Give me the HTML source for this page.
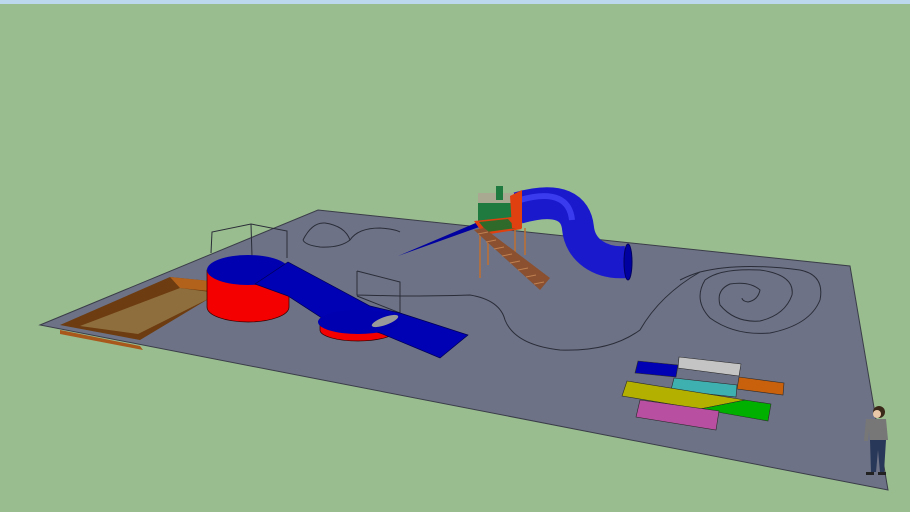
<!DOCTYPE html>
<html><head><style>html,body{margin:0;padding:0;width:910px;height:512px;overflow:hidden;background:#9abd8f}</style></head>
<body>
<svg width="910" height="512" viewBox="0 0 910 512" xmlns="http://www.w3.org/2000/svg">
<rect width="910" height="512" fill="#9abd8f"/>
<rect width="910" height="4" fill="#bcd8ee"/>
<polygon points="318,210 850,266 888,490 40,325" fill="#6d7286" stroke="#3a3d48" stroke-width="1"/>
<g fill="none" stroke="#2a2d38" stroke-width="1">
<path d="M303,240 Q312,222 325,223 Q345,226 350,240 Q340,248 320,247 Q305,245 303,240 M350,240 Q358,228 380,228 Q395,229 400,232"/>
<path d="M400,296 Q440,296 470,295 Q500,300 505,320 Q515,345 560,350 Q610,352 640,330 Q660,295 700,272 Q740,262 800,270 Q825,275 820,300 Q810,325 770,333 Q735,336 710,318 Q693,300 705,280 Q720,268 760,270 Q795,275 792,295 Q785,315 760,321 Q735,323 720,305 Q716,290 730,284 Q750,281 760,290 Q758,300 748,302 Q742,301 742,298"/>
<path d="M700,272 Q690,275 680,280"/>
<polyline points="211,253 212,232 251,224 287,231 287,258"/>
<polyline points="251,224 252,256"/>
<polyline points="357,271 357,295 400,296 400,313 357,296"/>
<polyline points="357,271 400,282 400,296"/>
</g>
<!-- sandbox -->
<polygon points="60,330 140,346 143,350 60,334" fill="#a8581a"/>
<polygon points="60,325 170,277 210,281 210,298 140,340" fill="#6d3c10"/>
<polygon points="80,326 180,288 210,292 210,298 138,334" fill="#8e6e3c"/>
<polygon points="170,277 210,281 210,291 180,288" fill="#b3621c"/>
<!-- cylinder 1 -->
<path d="M207,270 L207,307 A41,15 0 0 0 289,307 L289,270 Z" fill="#f40000" stroke="#300" stroke-width="0.7"/>
<ellipse cx="248" cy="270" rx="41" ry="15" fill="#0000b0"/>
<!-- cylinder 2 -->
<path d="M320,322 L320,330 A38,11 0 0 0 396,330 L396,322 Z" fill="#f40000" stroke="#300" stroke-width="0.7"/>
<!-- ramp -->
<polygon points="255,284 288,262 370,306 400,313 468,335 440,358 380,333 325,320 288,296" fill="#0000b4" stroke="#000050" stroke-width="0.7"/>
<ellipse cx="358" cy="322" rx="40" ry="12" fill="#0000b0"/>
<ellipse cx="385" cy="321" rx="14" ry="4" fill="#999" transform="rotate(-20 385 321)"/>
<polygon points="398,256 478,222 482,226" fill="#0000a0"/>
<!-- tube -->
<path d="M518,208 C560,196 576,208 578,228 C580,250 600,264 626,262" fill="none" stroke="#1a1acc" stroke-width="32" stroke-linecap="butt"/>
<path d="M520,200 C555,190 570,200 572,220" fill="none" stroke="#3a3aee" stroke-width="6"/>
<ellipse cx="628" cy="262" rx="4" ry="18" fill="#0000a0" stroke="#000060"/>
<!-- treehouse -->
<rect x="478" y="195" width="36" height="32" fill="#1f7a3f"/>
<rect x="478" y="193" width="36" height="10" fill="#a9a890"/>
<rect x="496" y="186" width="7" height="14" fill="#1f7a3f"/>
<polygon points="474,221 512,217 522,229 484,235" fill="#e04010"/>
<polygon points="479,222 508,219 516,228 487,232" fill="#2f6a2a"/>
<polygon points="510,196 522,190 522,228 512,228" fill="#e04010"/>
<g stroke="#c07030" stroke-width="1.5">
<line x1="480" y1="232" x2="480" y2="278"/><line x1="488" y1="235" x2="488" y2="265"/>
<line x1="515" y1="230" x2="515" y2="260"/><line x1="525" y1="228" x2="525" y2="255"/>
</g>
<polygon points="474,230 484,228 550,278 540,290" fill="#8a5030"/>
<g stroke="#c08050" stroke-width="1">
<line x1="478" y1="234" x2="488" y2="232"/><line x1="486" y1="242" x2="496" y2="240"/><line x1="494" y1="249" x2="504" y2="247"/><line x1="502" y1="256" x2="512" y2="254"/><line x1="510" y1="263" x2="520" y2="261"/><line x1="518" y1="270" x2="528" y2="268"/><line x1="526" y1="277" x2="536" y2="275"/><line x1="534" y1="284" x2="544" y2="282"/>
</g>
<g stroke="#2a2a2a" stroke-width="0.6">
<polygon points="638,361 678,365 676,377 635,373" fill="#0000b4"/>
<polygon points="679,357 741,364 739,376 678,368" fill="#c4c4c4"/>
<polygon points="739,377 784,383 783,395 737,389" fill="#c8600c"/>
<polygon points="674,378 737,385 736,397 671,390" fill="#3fb0b0"/>
<polygon points="627,381 745,400 700,409 622,396" fill="#b3b000"/>
<polygon points="700,409 745,400 771,404 768,421" fill="#00b000"/>
<polygon points="640,400 719,411 716,430 636,417" fill="#b84fa0"/>
</g>
<circle cx="879" cy="412" r="6" fill="#3a2818"/>
<circle cx="877" cy="414" r="4" fill="#e8c8a8"/>
<polygon points="868,419 886,419 888,440 870,440" fill="#777"/>
<polygon points="866,419 870,419 868,441 864,441" fill="#777"/>
<polygon points="870,440 886,440 884,472 880,472 878,450 876,472 871,472" fill="#283858"/>
<rect x="866" y="472" width="8" height="3" fill="#222"/><rect x="878" y="472" width="8" height="3" fill="#222"/>
</svg>
</body></html>
